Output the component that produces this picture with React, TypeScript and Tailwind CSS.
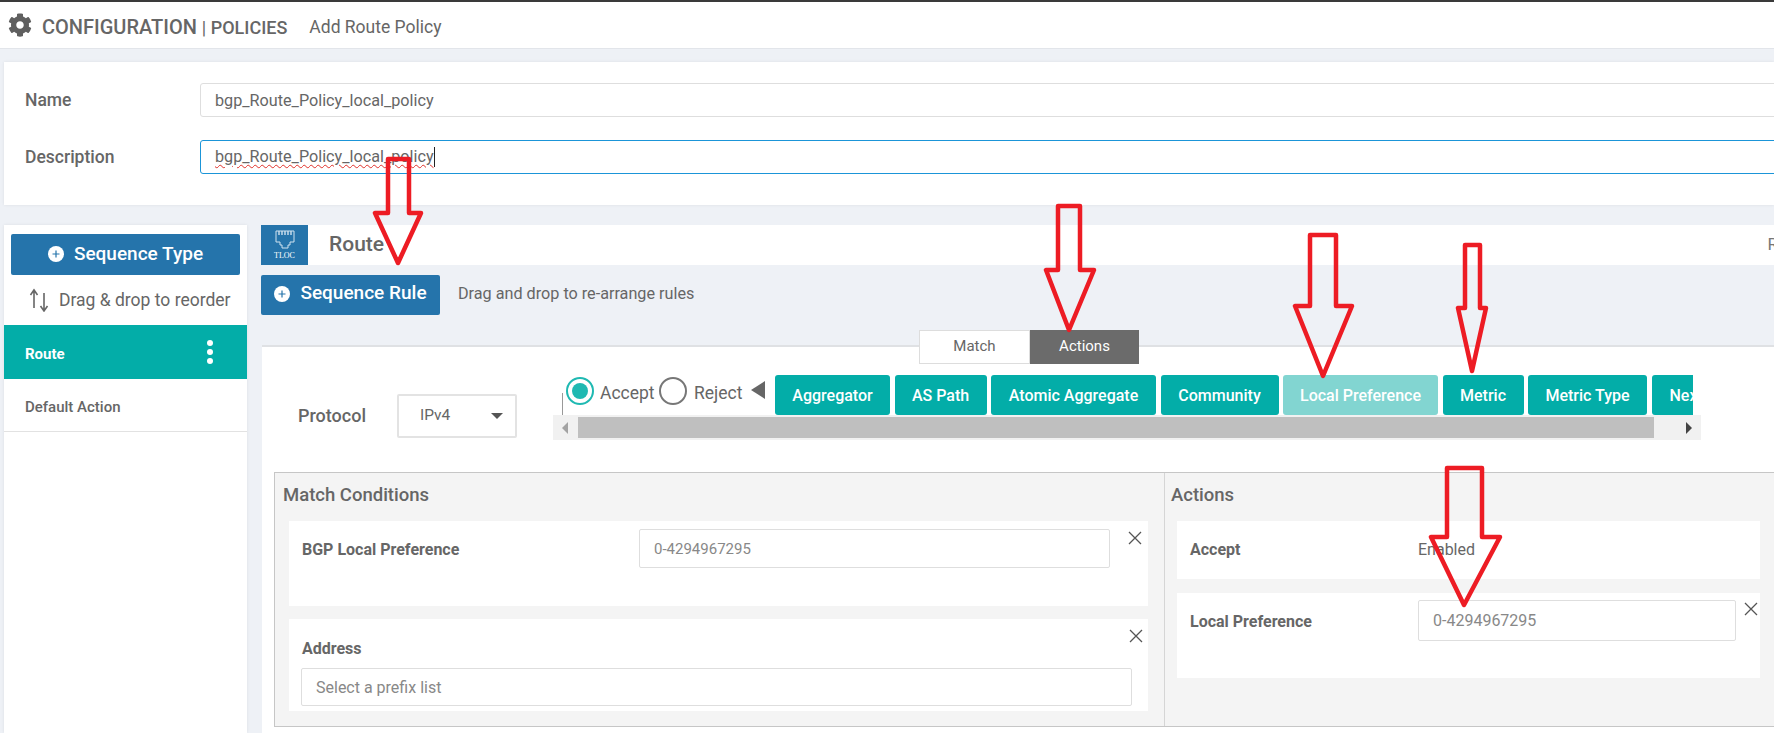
import { FaCog } from "react-icons/fa";

const filters = [
  { label: "Aggregator", w: "w-[115px]", active: false },
  { label: "AS Path", w: "w-[92px]", active: false },
  { label: "Atomic Aggregate", w: "w-[165px]", active: false },
  { label: "Community", w: "w-[118px]", active: false },
  { label: "Local Preference", w: "w-[155px]", active: true },
  { label: "Metric", w: "w-[81px]", active: false },
  { label: "Metric Type", w: "w-[119px]", active: false },
];

const arrows = [
  "388,159 409,159 409,213 421,213 398,263 375,213 388,213",
  "1058,206 1080,206 1080,270 1094,270 1069,330 1046,270 1058,270",
  "1310,235 1336,235 1336,306 1352,306 1323,376 1295,306 1310,306",
  "1465,245 1480,245 1480,308 1486,308 1472,371 1458,308 1465,308",
  "1447,468 1482,468 1482,537 1500,537 1464,605 1431,537 1447,537",
];

function PlusDisc() {
  return (
    <svg width="16" height="16" viewBox="0 0 16 16" className="shrink-0">
      <circle cx="8" cy="8" r="8" fill="#fff" />
      <path d="M8 4.5v7M4.5 8h7" stroke="#2574ab" strokeWidth="1.2" />
    </svg>
  );
}

function CloseX({ className = "" }: { className?: string }) {
  return (
    <svg width="14" height="14" viewBox="0 0 14 14" className={`shrink-0 ${className}`}>
      <path d="M1 1l12 12M13 1L1 13" stroke="#555" strokeWidth="1.3" fill="none" />
    </svg>
  );
}

function TlocIcon() {
  return (
    <div className="flex h-[40px] w-[47px] shrink-0 flex-col items-center justify-center bg-[#2574ab]">
      <svg width="20" height="19" viewBox="0 0 20 19" fill="none" stroke="#cfe2ef" strokeWidth="1">
        <path d="M1 1h18v11h-4v3h-2v3H7v-3H5v-3H1z" />
        <path d="M4 1v4M7 1v4M10 1v4M13 1v4M16 1v4" strokeWidth="1.4" />
      </svg>
      <span className="mt-[3px] font-['Liberation_Serif',serif] text-[8px] leading-[8px] text-white">TLOC</span>
    </div>
  );
}

export default function App() {
  return (
    <div className="relative flex h-[733px] w-[1774px] flex-col overflow-hidden bg-[#eef1f6] font-['Roboto',sans-serif] text-[#666]">
      {/* header */}
      <header className="flex h-[49px] shrink-0 items-center border-t-2 border-b border-t-[#3a3a3a] border-b-[#e2e5ea] bg-white pt-[4px] pl-[8px]">
        <FaCog className="mb-[4px] text-[24px] text-[#5f5f5f]" />
        <span className="ml-[10px] text-[20px] font-medium text-[#666]">CONFIGURATION</span>
        <span className="ml-[5px] text-[18px] text-[#666]">| <span className="font-medium">POLICIES</span></span>
        <span className="ml-[22px] text-[17.5px] text-[#666]">Add Route Policy</span>
      </header>

      {/* name + description */}
      <section className="mt-[13px] ml-[4px] flex h-[143px] shrink-0 flex-col gap-[23px] bg-white pt-[21px] pl-[21px] shadow-[0_0_3px_rgba(0,0,0,0.08)]">
        <div className="mr-[-10px] flex items-center">
          <label className="w-[175px] text-[17.5px] font-medium">Name</label>
          <input
            readOnly
            value="bgp_Route_Policy_local_policy"
            className="h-[34px] flex-1 rounded-[3px] border border-[#dedede] bg-white pl-[14px] text-[16.2px] text-[#666] outline-none"
          />
        </div>
        <div className="mr-[-10px] flex items-center">
          <label className="w-[175px] text-[17.5px] font-medium">Description</label>
          <div className="flex h-[34px] flex-1 items-center rounded-[3px] border border-[#1b95d8] bg-white pl-[14px] text-[16.2px]">
            <span className="underline decoration-[#e0302a] decoration-wavy decoration-1 underline-offset-2">bgp_Route_Policy_local_policy</span>
            <span className="h-[20px] w-px bg-[#222]" />
          </div>
        </div>
      </section>

      <div className="mt-[20px] flex min-h-0 flex-1">
        {/* sequence sidebar */}
        <aside className="ml-[4px] w-[243px] shrink-0 bg-white pt-[9px] shadow-[0_0_3px_rgba(0,0,0,0.08)]">
          <button className="mx-[7px] flex h-[41px] w-[229px] items-center justify-center gap-[10px] rounded-[2px] bg-[#2574ab] pb-[1px] text-[19px] font-medium text-white">
            <PlusDisc />
            Sequence Type
          </button>
          <div className="flex h-[50px] items-center pl-[24px] text-[17.5px]">
            <svg width="22" height="24" viewBox="0 0 22 24" fill="none" stroke="#666" strokeWidth="1.6" className="mr-[9px] shrink-0">
              <path d="M6 20V3M2.5 7L6 2l3.5 5" />
              <path d="M16 5v17M12.5 18l3.5 5 3.5-5" />
            </svg>
            Drag &amp; drop to reorder
          </div>
          <div className="flex h-[54px] items-center justify-between bg-[#03ada8] pr-[34px] pl-[21px] text-[15px] font-bold text-white">
            <span className="pt-[4px]">Route</span>
            <span className="flex flex-col gap-[3px]">
              <span className="size-[6px] rounded-full bg-white" />
              <span className="size-[6px] rounded-full bg-white" />
              <span className="size-[6px] rounded-full bg-white" />
            </span>
          </div>
          <div className="flex h-[53px] items-center border-b border-[#e2e2e2] pt-[4px] pl-[21px] text-[15px] font-medium">Default Action</div>
        </aside>

        <main className="ml-[14px] flex min-w-0 flex-1 flex-col">
          <div className="flex h-[40px] shrink-0 items-center justify-between overflow-hidden bg-white">
            <div className="flex items-center">
              <TlocIcon />
              <span className="ml-[21px] text-[21px] font-medium text-[#666]">Route</span>
            </div>
            <span className="mr-[-4px] text-[17px] text-[#777]">R</span>
          </div>

          <div className="mt-[10px] flex h-[40px] shrink-0 items-center">
            <button className="flex h-[40px] w-[179px] items-center justify-center gap-[10px] rounded-[2px] bg-[#2574ab] pb-[3px] text-[19px] font-medium text-white">
              <PlusDisc />
              Sequence Rule
            </button>
            <span className="ml-[18px] pb-[2px] text-[16.2px]">Drag and drop to re-arrange rules</span>
          </div>

          {/* rule panel */}
          <section className="mt-[30px] ml-px flex min-h-0 flex-1 flex-col border-t-2 border-[#dfe1e4] bg-white">
            <div className="-mt-[17px] ml-[657px] flex h-[34px] w-[220px] shrink-0 text-[15px]">
              <span className="flex w-[111px] items-center justify-center border border-[#ddd] bg-white pb-[1px]">Match</span>
              <span className="flex w-[109px] items-center justify-center bg-[#6b6b6b] pb-[1px] text-white">Actions</span>
            </div>

            <div className="mt-[11px] flex h-[65px] shrink-0 items-center">
              <span className="ml-[36px] w-[99px] pt-[16px] text-[18px] font-medium">Protocol</span>
              <div className="mt-[16px] flex h-[44px] w-[120px] items-center justify-between rounded-[2px] border-2 border-[#e3e3e3] pr-[12px] pl-[21px] text-[15.5px]">
                IPv4
                <span className="size-0 border-x-[6px] border-t-[6px] border-x-transparent border-t-[#555]" />
              </div>

              <div className="ml-[36px] flex w-[1148px] flex-col">
                <div className="flex h-[40px]">
                  <div className="flex w-[222px] shrink-0 pt-[2px] pl-[9px] text-[17.5px]">
                    <span className="mt-[16px] h-[22px] w-px bg-[#999]" />
                    <span className="ml-[3px] flex size-[28px] items-center justify-center rounded-full border-2 border-[#1fb9b2]">
                      <span className="size-[16px] rounded-full bg-[#1fb9b2]" />
                    </span>
                    <span className="mt-[2px] ml-[6px] w-[59px] leading-[28px]">Accept</span>
                    <span className="size-[28px] rounded-full border-2 border-[#777]" />
                    <span className="mt-[2px] ml-[7px] w-[57px] leading-[28px]">Reject</span>
                    <span className="mt-[4px] size-0 border-y-[9px] border-r-[14px] border-y-transparent border-r-[#666]" />
                  </div>
                  <div className="flex w-[918px] gap-[4.5px] overflow-hidden">
                    {filters.map((f) => (
                      <span
                        key={f.label}
                        className={`flex h-[40px] shrink-0 items-center justify-center rounded-[3px] pt-[1px] text-[16px] font-medium text-white ${f.w} ${
                          f.active ? "bg-[#82d5d1]" : "bg-[#03ada8]"
                        }`}
                      >
                        {f.label}
                      </span>
                    ))}
                    <span className="flex h-[40px] w-[60px] shrink-0 items-center rounded-[3px] bg-[#03ada8] pt-[1px] pl-[18px] text-[16px] font-medium text-white">
                      Next
                    </span>
                  </div>
                </div>
                {/* horizontal scrollbar */}
                <div className="flex h-[25px] items-center bg-[#f1f1f1]">
                  <span className="ml-[9px] size-0 border-y-[6px] border-r-[6px] border-y-transparent border-r-[#a3a3a3]" />
                  <span className="ml-[10px] h-[21px] w-[1076px] bg-[#bfbfbf]" />
                  <span className="ml-[32px] size-0 border-y-[6px] border-l-[6px] border-y-transparent border-l-[#444]" />
                </div>
              </div>
            </div>

            {/* match conditions + actions */}
            <div className="mt-[32px] ml-[12px] flex h-[255px] shrink-0 border-y border-l border-[#c6c6c6] bg-[#f4f4f4]">
              <div className="w-[890px] shrink-0 border-r border-[#d5d5d5] pr-[16px] pl-[14px]">
                <h3 className="ml-[-6px] flex h-[48px] items-center pb-[3px] text-[18.5px] font-medium">Match Conditions</h3>
                <div className="flex h-[85px] items-start bg-white pt-[8px] pl-[13px]">
                  <span className="flex h-[39px] w-[337px] items-center pt-[3px] text-[16px] font-bold">BGP Local Preference</span>
                  <input
                    readOnly
                    placeholder="0-4294967295"
                    className="h-[39px] w-[471px] rounded-[2px] border border-[#dedede] bg-white pl-[14px] text-[15px] outline-none placeholder:text-[#888]"
                  />
                  <CloseX className="mt-[2px] ml-[18px]" />
                </div>
                <div className="mt-[13px] h-[92px] bg-white px-[12px]">
                  <div className="flex h-[49px] justify-between">
                    <span className="ml-px pt-[18px] text-[16px] font-bold">Address</span>
                    <CloseX className="mt-[10px] mr-[-7px]" />
                  </div>
                  <input
                    readOnly
                    placeholder="Select a prefix list"
                    className="h-[38px] w-[831px] rounded-[2px] border border-[#dedede] bg-white pl-[14px] text-[16px] outline-none placeholder:text-[#888]"
                  />
                </div>
              </div>

              <div className="flex-1 pr-[14px] pl-[12px]">
                <h3 className="ml-[-6px] flex h-[48px] items-center pb-[3px] text-[18.5px] font-medium">Actions</h3>
                <div className="flex h-[58px] items-center bg-white pl-[13px] text-[16px]">
                  <span className="w-[228px] font-bold">Accept</span>
                  <span>Enabled</span>
                </div>
                <div className="mt-[14px] flex h-[85px] items-start bg-white pt-[7px] pl-[13px]">
                  <span className="flex h-[41px] w-[228px] items-center pt-[2px] text-[16px] font-bold">Local Preference</span>
                  <input
                    readOnly
                    placeholder="0-4294967295"
                    className="h-[41px] w-[318px] rounded-[2px] border border-[#dedede] bg-white pl-[14px] text-[16px] outline-none placeholder:text-[#888]"
                  />
                  <CloseX className="mt-[2px] ml-[8px]" />
                </div>
              </div>
            </div>
          </section>
        </main>
      </div>

      {/* hand drawn annotation arrows over the screenshot */}
      <svg viewBox="0 0 1774 733" className="pointer-events-none absolute inset-0 h-[733px] w-[1774px]">
        {arrows.map((pts) => (
          <polygon key={pts} points={pts} fill="none" stroke="#ed1c24" strokeWidth="4.5" strokeLinejoin="round" />
        ))}
      </svg>
    </div>
  );
}
